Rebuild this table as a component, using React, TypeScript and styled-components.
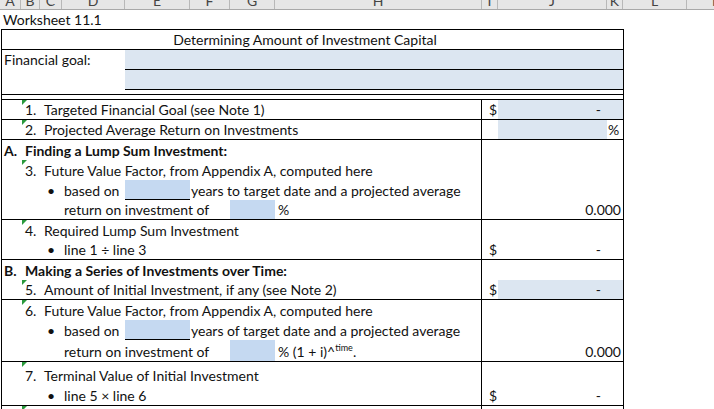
import React from "react";
import styled, { createGlobalStyle } from "styled-components";

const GlobalStyle = createGlobalStyle`
  html, body { margin: 0; padding: 0; overflow: hidden; background: #ffffff; }
  body {
    font-family: Lato, "Liberation Sans", sans-serif;
    font-size: 14px;
    color: #111111;
  }
  #root { width: 714px; height: 409px; overflow: hidden; }
`;

const Sheet = styled.div`
  width: 714px;
`;

const HeaderBar = styled.div`
  display: grid;
  grid-template-columns: 21px 19px 22px 63px 65px 40px 45px 207px 16px 109px 16px 64px 64px 1fr;
  height: 9px;
  background: #e6e6e6;
  border-bottom: 1px solid #a8a8a8;
  overflow: hidden;
`;

const HeaderCell = styled.div`
  display: flex;
  align-items: flex-end;
  justify-content: center;
  border-right: 1px solid #b8b8b8;
  color: #444444;
  font-size: 14px;
  line-height: 17px;
  overflow: hidden;
`;

const SheetTitle = styled.div`
  height: 19px;
  display: flex;
  align-items: flex-end;
  padding-left: 3px;
  line-height: 18px;
`;

const Table = styled.div`
  margin-left: 1px;
  width: 621px;
  border: 1px solid #000000;
  border-bottom: none;
`;

const TitleRow = styled.div`
  height: 19px;
  border-bottom: 1px solid #000000;
  display: flex;
  align-items: flex-end;
  justify-content: center;
  padding-right: 15px;
  line-height: 18px;
`;

const GoalGrid = styled.div`
  display: grid;
  grid-template-columns: 123px 1fr;
  grid-template-rows: 20px 20px;
`;

const GoalLabel = styled.div`
  grid-row: 1;
  grid-column: 1;
  display: flex;
  align-items: flex-end;
  padding-left: 2px;
  padding-bottom: 1px;
  line-height: 18px;
`;

const GoalField = styled.div<{ $row: number }>`
  grid-row: ${(p) => p.$row};
  grid-column: 2;
  background: #dce6f1;
  border-bottom: 1px solid #000000;
`;

const Spacer = styled.div`
  height: 4px;
  border-bottom: 1px solid #000000;
`;

const Block = styled.div`
  border-bottom: 1px solid #000000;
`;

const OpenBlock = styled.div``;

const Line = styled.div<{ $h?: number }>`
  display: grid;
  grid-template-columns: 480px 16px 109px 16px;
  height: ${(p) => p.$h ?? 20}px;
`;

const LabelArea = styled.div`
  position: relative;
  display: grid;
  grid-template-columns: 19px 19px 22px 63px 65px 40px 45px 206px;
  border-right: 1px solid #000000;
  white-space: nowrap;
`;

const Cell = styled.div<{ $col: string; $pad?: number; $bold?: boolean; $center?: boolean }>`
  grid-column: ${(p) => p.$col};
  display: flex;
  align-items: flex-end;
  justify-content: ${(p) => (p.$center ? "center" : "flex-start")};
  padding-left: ${(p) => p.$pad ?? 0}px;
  font-weight: ${(p) => (p.$bold ? 700 : 400)};
  line-height: 18px;
  min-width: 0;
  white-space: nowrap;
`;

const Run = styled.span`
  display: block;
`;

const Num = styled.span<{ $w?: number }>`
  display: inline-block;
  width: ${(p) => p.$w ?? 19}px;
`;

const Sup = styled.sup`
  font-size: 9px;
  line-height: 0;
  vertical-align: 6px;
`;

const Flag = styled.span`
  position: absolute;
  left: 20px;
  top: 0;
  width: 0;
  height: 0;
  border-top: 5px solid #2a9a3c;
  border-right: 5px solid transparent;
`;

const InputBox = styled.div<{ $col: number; $underline?: boolean }>`
  grid-column: ${(p) => p.$col};
  background: #c5d9f1;
  border-bottom: ${(p) => (p.$underline ? "1px solid #000000" : "none")};
`;

const ValueCell = styled.div<{ $col: string; $fill?: boolean; $end?: boolean; $pl?: number; $pr?: number }>`
  grid-column: ${(p) => p.$col};
  display: flex;
  align-items: flex-end;
  justify-content: ${(p) => (p.$end ? "flex-end" : "flex-start")};
  padding-left: ${(p) => p.$pl ?? 0}px;
  padding-right: ${(p) => p.$pr ?? 0}px;
  background: ${(p) => (p.$fill ? "#dce6f1" : "transparent")};
  line-height: 18px;
  white-space: nowrap;
`;

const letters = ["A", "B", "C", "D", "E", "F", "G", "H", "I", "J", "K", "L", "M", "N"];

function Item({ n, children }: { n: string; children: React.ReactNode }) {
  return (
    <Cell $col="2 / 9" $pad={4}>
      <Run>
        <Num>{n}</Num>
        {children}
      </Run>
    </Cell>
  );
}

function Section({ n, children }: { n: string; children: React.ReactNode }) {
  return (
    <Cell $col="1 / 9" $pad={2} $bold>
      <Run>
        <Num $w={21}>{n}</Num>
        {children}
      </Run>
    </Cell>
  );
}

function Bullet() {
  return (
    <Cell $col="3" $center>
      <Run>•</Run>
    </Cell>
  );
}

function Dollar() {
  return (
    <ValueCell $col="2" $pl={7}>
      $
    </ValueCell>
  );
}

function Dash({ fill }: { fill?: boolean }) {
  return (
    <ValueCell $col="3 / 5" $fill={fill} $end $pr={22}>
      -
    </ValueCell>
  );
}

function Factor() {
  return (
    <ValueCell $col="3 / 5" $end $pr={2}>
      0.000
    </ValueCell>
  );
}

export default function App() {
  return (
    <>
      <GlobalStyle />
      <Sheet>
        <HeaderBar>
          {letters.map((l) => (
            <HeaderCell key={l}>{l}</HeaderCell>
          ))}
        </HeaderBar>
        <SheetTitle>Worksheet 11.1</SheetTitle>
        <Table>
          <TitleRow>Determining Amount of Investment Capital</TitleRow>
          <GoalGrid>
            <GoalLabel>Financial goal:</GoalLabel>
            <GoalField $row={1} />
            <GoalField $row={2} />
          </GoalGrid>
          <Spacer />
          <Spacer />

          <Block>
            <Line $h={19}>
              <LabelArea>
                <Flag />
                <Item n="1.">Targeted Financial Goal (see Note 1)</Item>
              </LabelArea>
              <Dollar />
              <Dash fill />
            </Line>
          </Block>

          <Block>
            <Line $h={19}>
              <LabelArea>
                <Flag />
                <Item n="2.">Projected Average Return on Investments</Item>
              </LabelArea>
              <ValueCell $col="3" $fill />
              <ValueCell $col="4" $pl={1}>
                %
              </ValueCell>
            </Line>
          </Block>

          <Block>
            <Line>
              <LabelArea>
                <Section n="A.">Finding a Lump Sum Investment:</Section>
              </LabelArea>
            </Line>
            <Line>
              <LabelArea>
                <Flag />
                <Item n="3.">Future Value Factor, from Appendix A, computed here</Item>
              </LabelArea>
            </Line>
            <Line>
              <LabelArea>
                <Bullet />
                <Cell $col="4" $pad={2}>
                  <Run>based on</Run>
                </Cell>
                <InputBox $col={5} $underline />
                <Cell $col="6 / 9" $pad={1}>
                  <Run>years to target date and a projected average</Run>
                </Cell>
              </LabelArea>
            </Line>
            <Line $h={19}>
              <LabelArea>
                <Cell $col="4 / 7" $pad={2}>
                  <Run>return on investment of</Run>
                </Cell>
                <InputBox $col={7} />
                <Cell $col="8" $pad={3}>
                  <Run>%</Run>
                </Cell>
              </LabelArea>
              <Factor />
            </Line>
          </Block>

          <Block>
            <Line>
              <LabelArea>
                <Flag />
                <Item n="4.">Required Lump Sum Investment</Item>
              </LabelArea>
            </Line>
            <Line $h={19}>
              <LabelArea>
                <Bullet />
                <Cell $col="4 / 9" $pad={2}>
                  <Run>line 1 ÷ line 3</Run>
                </Cell>
              </LabelArea>
              <Dollar />
              <Dash />
            </Line>
          </Block>

          <Block>
            <Line>
              <LabelArea>
                <Section n="B.">Making a Series of Investments over Time:</Section>
              </LabelArea>
            </Line>
            <Line $h={19}>
              <LabelArea>
                <Flag />
                <Item n="5.">Amount of Initial Investment, if any (see Note 2)</Item>
              </LabelArea>
              <Dollar />
              <Dash fill />
            </Line>
          </Block>

          <Block>
            <Line>
              <LabelArea>
                <Flag />
                <Item n="6.">Future Value Factor, from Appendix A, computed here</Item>
              </LabelArea>
            </Line>
            <Line>
              <LabelArea>
                <Bullet />
                <Cell $col="4" $pad={2}>
                  <Run>based on</Run>
                </Cell>
                <InputBox $col={5} $underline />
                <Cell $col="6 / 9" $pad={1}>
                  <Run>years of target date and a projected average</Run>
                </Cell>
              </LabelArea>
            </Line>
            <Line $h={21}>
              <LabelArea>
                <Cell $col="4 / 7" $pad={2}>
                  <Run>return on investment of</Run>
                </Cell>
                <InputBox $col={7} />
                <Cell $col="8" $pad={3}>
                  <Run>
                    % (1 + i)^<Sup>time</Sup>.
                  </Run>
                </Cell>
              </LabelArea>
              <Factor />
            </Line>
          </Block>

          <Block>
            <Line $h={23}>
              <LabelArea>
                <Flag />
                <Item n="7.">Terminal Value of Initial Investment</Item>
              </LabelArea>
            </Line>
            <Line $h={20}>
              <LabelArea>
                <Bullet />
                <Cell $col="4 / 9" $pad={2}>
                  <Run>line 5 × line 6</Run>
                </Cell>
              </LabelArea>
              <Dollar />
              <Dash />
            </Line>
          </Block>

          <OpenBlock>
            <Line>
              <LabelArea>
                <Flag />
              </LabelArea>
            </Line>
          </OpenBlock>
        </Table>
      </Sheet>
    </>
  );
}
